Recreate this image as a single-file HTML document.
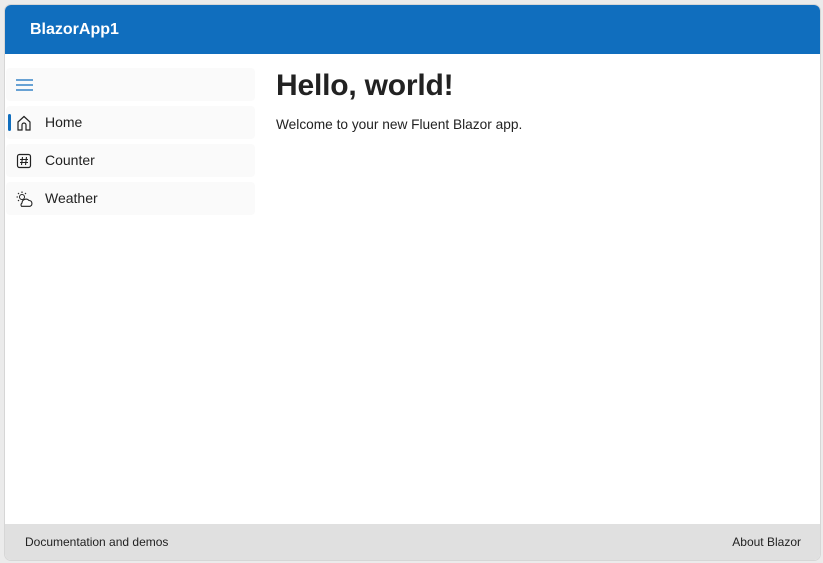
<!DOCTYPE html>
<html><head><style>
html,body{margin:0;padding:0;width:823px;height:563px;background:#ebebeb;overflow:hidden;font-family:"Segoe UI","Liberation Sans",sans-serif;}
.card{position:absolute;left:4px;top:4px;width:817px;height:557px;background:#fff;border-radius:7px;overflow:hidden;border:1px solid #d6d6d6;box-sizing:border-box;}
.hdr{position:absolute;left:0;top:0;right:0;height:49px;background:#106ebe;}
.hdr span{position:absolute;left:25px;top:16px;color:#fff;font-weight:bold;font-size:16px;}
.nav{position:absolute;left:1px;width:249px;height:33px;background:#fafafa;border-radius:4px;}
.nav .t{position:absolute;left:39px;top:8px;font-size:14px;color:#222;}
.nav svg{position:absolute;left:10px;top:9px;}
.ftr{position:absolute;left:0;right:0;bottom:0;height:36px;background:#e0e0e0;font-size:12px;color:#222;}
h1{position:absolute;left:271px;top:64px;margin:0;font-size:30px;font-weight:600;color:#222;letter-spacing:-0.2px;}
p{position:absolute;left:271px;top:112px;margin:0;font-size:13.7px;color:#222;}
</style></head><body>
<div class="card">
<div class="hdr"><span>BlazorApp1</span></div>
<div class="nav" style="top:63px"><svg width="20" height="16" viewBox="0 0 20 16" style="left:9px"><path d="M1 3h17M1 8h17M1 13h17" stroke="#106ebe" stroke-width="1.3"/></svg></div>
<div class="nav" style="top:101px"><div style="position:absolute;left:2px;top:8px;width:3px;height:17px;background:#106ebe;border-radius:2px"></div>
<svg width="16" height="16" viewBox="0 0 16 16"><path d="M2 7L8 1.5 14 7V15H10V10a2 2 0 0 0-4 0V15H2Z" fill="none" stroke="#222" stroke-width="1.2"/></svg><span class="t">Home</span></div>
<div class="nav" style="top:139px"><svg width="16" height="16" viewBox="0 0 16 16"><rect x="1.5" y="1.5" width="13" height="13" rx="2" fill="none" stroke="#222" stroke-width="1.2"/><path d="M6.5 4L5.5 12M10.5 4L9.5 12M4 6.5h8M4 9.5h8" stroke="#222" stroke-width="1.1"/></svg><span class="t">Counter</span></div>
<div class="nav" style="top:177px"><svg width="18" height="16" viewBox="0 0 18 16"><circle cx="6" cy="6" r="2.5" fill="none" stroke="#222"/><path d="M6 0.5v1.5M0.5 6h1.5M2 2l1 1M10 2l-1 1M2 10l1-1M6 12a4 4 0 0 1 7-2.5a3 3 0 0 1 1 5.8H5.5a2.3 2.3 0 0 1 .5-3.3z" fill="#fff" stroke="#222" stroke-width="1.1"/></svg><span class="t">Weather</span></div>
<h1>Hello, world!</h1>
<p>Welcome to your new Fluent Blazor app.</p>
<div class="ftr"><span style="position:absolute;left:20px;top:11px">Documentation and demos</span><span style="position:absolute;right:19px;top:11px">About Blazor</span></div>
</div>
</body></html>
